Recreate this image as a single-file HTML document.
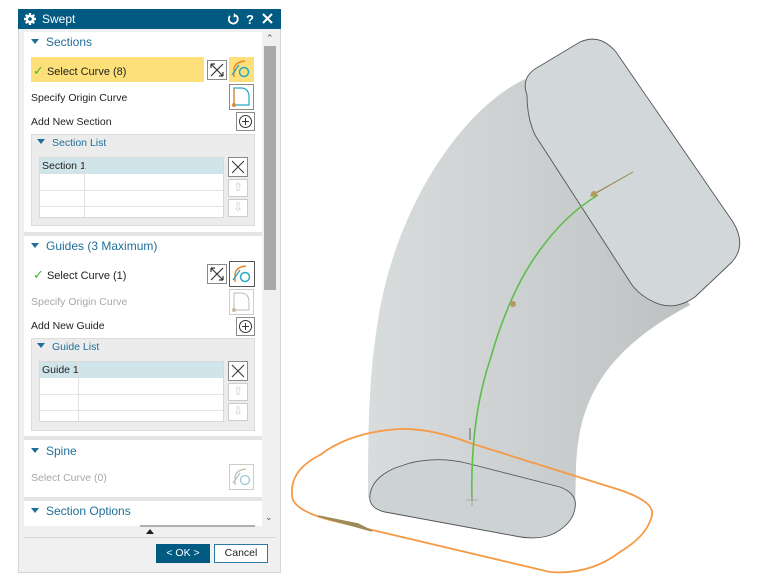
<!DOCTYPE html>
<html><head><meta charset="utf-8"><style>
*{margin:0;padding:0;box-sizing:border-box}
body{width:768px;height:583px;background:#fff;position:relative;overflow:hidden;font-family:"Liberation Sans",sans-serif;font-size:10.5px;color:#222}
.a{position:absolute}
.hdr{color:#1f6e9a;font-size:12px}
.tri{display:inline-block;width:0;height:0;border-left:4px solid transparent;border-right:4px solid transparent;border-top:5px solid #1f6e9a;margin-right:7px;vertical-align:2px}
.ib{position:absolute;border:1px solid #8a8a8a;background:#fff}
.gray{color:#a8a8a8}
.list{position:absolute;background:#ececec;border:1px solid #dcdcdc}
.tbl{position:absolute;background:#fff;border:1px solid #d8d8d8}
.sep{position:absolute;left:24px;width:238px;height:4px;background:#e4e4e4}
</style></head><body>
<div class="a" style="left:18px;top:9px;width:263px;height:564px;background:#f0f0f0;border:1px solid #d6d6d6"></div>
<div class="a" style="left:18px;top:9px;width:263px;height:20px;background:#005a82;color:#fff;font-size:12px;line-height:20px;padding-left:24px">Swept</div>
<svg class="a" style="left:23px;top:12px" width="14" height="14" viewBox="0 0 14 14"><circle cx="7" cy="7" r="4.3" fill="#fff"/><g stroke="#fff" stroke-width="2.4"><path d="M7 1v12M1 7h12M2.8 2.8l8.4 8.4M11.2 2.8l-8.4 8.4"/></g><circle cx="7" cy="7" r="1.8" fill="#005a82"/></svg>
<svg class="a" style="left:227px;top:12px" width="50" height="14" viewBox="0 0 50 14"><path d="M3 4 A4.5 4.5 0 1 0 9 3.5" fill="none" stroke="#fff" stroke-width="1.8"/><path d="M7 1 L10 4 L6.5 5.5Z" fill="#fff"/><text x="19" y="12" fill="#fff" font-size="13" font-weight="bold" font-family="Liberation Sans">?</text><path d="M36 2 L45 11 M45 2 L36 11" stroke="#fff" stroke-width="2"/></svg>
<div class="a" style="left:24px;top:32px;width:238px;height:494px;background:#fff"></div>
<div class="a" style="left:263px;top:32px;width:14px;height:494px;background:#f0f0f0"></div>
<div class="a" style="left:264px;top:46px;width:12px;height:244px;background:#a8a8a8"></div>
<div class="a" style="left:266px;top:33px;font-size:9px;color:#555">&#8963;</div>
<div class="a" style="left:265px;top:512px;font-size:9px;color:#555">&#8964;</div>
<div class="a hdr" style="left:31px;top:35px"><span class="tri"></span>Sections</div>
<div class="a" style="left:31px;top:57px;width:173px;height:25px;background:#fde07a"></div>
<div class="a" style="left:33px;top:63px;font-size:11px"><span style="color:#3cb83c;font-size:13px">&#10003;</span> Select Curve (8)</div>
<div class="ib" style="left:207px;top:60px;width:20px;height:20px"><svg width="18" height="18"><path d="M3 3L15 15M15 3L3 15M3 3h4M3 3v4M15 15h-4M15 15v-4" stroke="#333" stroke-width="1.2" fill="none"/></svg></div>
<div class="a" style="left:229px;top:57px;width:25px;height:25px;background:#fde07a"><svg width="25" height="25"><path d="M5 20 L5 12 Q6 5 16 4" stroke="#e8842a" stroke-width="1.4" fill="none"/><circle cx="15" cy="15" r="4.5" stroke="#2aa7c9" stroke-width="1.5" fill="none"/><path d="M3 18 L10 8" stroke="#2aa7c9" stroke-width="1.4"/></svg></div>
<div class="a" style="left:31px;top:92px">Specify Origin Curve</div>
<div class="ib" style="left:229px;top:84px;width:25px;height:26px"><svg width="23" height="24"><path d="M4 20 V3 H12 Q19 4 19 12 V20 H4" stroke="#2aa7c9" stroke-width="1.2" fill="none"/><path d="M4 4V20" stroke="#e8842a" stroke-width="1.3"/><circle cx="4" cy="20" r="2" fill="#e8842a"/></svg></div>
<div class="a" style="left:31px;top:116px">Add New Section</div>
<div class="ib" style="left:236px;top:112px;width:19px;height:19px"><svg width="17" height="17"><circle cx="8.5" cy="8.5" r="6" stroke="#333" fill="none"/><path d="M8.5 5v7M5 8.5h7" stroke="#333"/></svg></div>
<div class="list" style="left:31px;top:134px;width:224px;height:92px"></div>
<div class="a hdr" style="left:37px;top:137px;font-size:10.5px"><span class="tri"></span>Section List</div>
<div class="tbl" style="left:39px;top:157px;width:185px;height:61px"></div>
<div class="a" style="left:40px;top:158px;width:183px;height:16px;background:#cfe5ea"></div>
<div class="a" style="left:42px;top:160px">Section 1</div>
<div class="a" style="left:84px;top:158px;width:1px;height:59px;background:#e0e0e0"></div>
<div class="a" style="left:40px;top:190px;width:183px;height:1px;background:#e4e4e4"></div>
<div class="a" style="left:40px;top:206px;width:183px;height:1px;background:#e4e4e4"></div>
<div class="ib" style="left:228px;top:157px;width:20px;height:20px"><svg width="18" height="18"><path d="M3 3L15 15M15 3L3 15" stroke="#333"/></svg></div>
<div class="ib" style="left:228px;top:179px;width:20px;height:18px;border-color:#ccc;color:#ccc;text-align:center;font-size:12px">&#8679;</div>
<div class="ib" style="left:228px;top:199px;width:20px;height:18px;border-color:#ccc;color:#ccc;text-align:center;font-size:12px">&#8681;</div>
<div class="sep" style="top:232px"></div>
<div class="a hdr" style="left:31px;top:239px"><span class="tri"></span>Guides (3 Maximum)</div>
<div class="a" style="left:33px;top:267px;font-size:11px"><span style="color:#3cb83c;font-size:13px">&#10003;</span> Select Curve (1)</div>
<div class="ib" style="left:207px;top:264px;width:20px;height:20px"><svg width="18" height="18"><path d="M3 3L15 15M15 3L3 15M3 3h4M3 3v4M15 15h-4M15 15v-4" stroke="#333" stroke-width="1.2" fill="none"/></svg></div>
<div class="ib" style="left:229px;top:261px;width:26px;height:26px;border-color:#555"><svg width="24" height="24"><path d="M5 20 L5 12 Q6 5 16 4" stroke="#e8842a" stroke-width="1.4" fill="none"/><circle cx="15" cy="15" r="4.5" stroke="#2aa7c9" stroke-width="1.5" fill="none"/><path d="M3 18 L10 8" stroke="#2aa7c9" stroke-width="1.4"/></svg></div>
<div class="a gray" style="left:31px;top:296px">Specify Origin Curve</div>
<div class="ib" style="left:229px;top:289px;width:25px;height:26px;border-color:#ccc"><svg width="23" height="24"><path d="M4 20 V3 H12 Q19 4 19 12 V20 H4" stroke="#bbb" fill="none"/><circle cx="4" cy="20" r="2" fill="#c9b9a0"/></svg></div>
<div class="a" style="left:31px;top:320px">Add New Guide</div>
<div class="ib" style="left:236px;top:317px;width:19px;height:19px"><svg width="17" height="17"><circle cx="8.5" cy="8.5" r="6" stroke="#333" fill="none"/><path d="M8.5 5v7M5 8.5h7" stroke="#333"/></svg></div>
<div class="list" style="left:31px;top:338px;width:224px;height:93px"></div>
<div class="a hdr" style="left:37px;top:341px;font-size:10.5px"><span class="tri"></span>Guide List</div>
<div class="tbl" style="left:39px;top:361px;width:185px;height:61px"></div>
<div class="a" style="left:40px;top:362px;width:183px;height:16px;background:#cfe5ea"></div>
<div class="a" style="left:42px;top:364px">Guide 1</div>
<div class="a" style="left:78px;top:362px;width:1px;height:59px;background:#e0e0e0"></div>
<div class="a" style="left:40px;top:394px;width:183px;height:1px;background:#e4e4e4"></div>
<div class="a" style="left:40px;top:410px;width:183px;height:1px;background:#e4e4e4"></div>
<div class="ib" style="left:228px;top:361px;width:20px;height:20px"><svg width="18" height="18"><path d="M3 3L15 15M15 3L3 15" stroke="#333"/></svg></div>
<div class="ib" style="left:228px;top:383px;width:20px;height:18px;border-color:#ccc;color:#ccc;text-align:center;font-size:12px">&#8679;</div>
<div class="ib" style="left:228px;top:403px;width:20px;height:18px;border-color:#ccc;color:#ccc;text-align:center;font-size:12px">&#8681;</div>
<div class="sep" style="top:436px"></div>
<div class="a hdr" style="left:31px;top:444px"><span class="tri"></span>Spine</div>
<div class="a gray" style="left:31px;top:472px">Select Curve (0)</div>
<div class="ib" style="left:229px;top:464px;width:25px;height:26px;border-color:#ccc"><svg width="23" height="24"><path d="M5 20 L5 12 Q6 5 16 4" stroke="#c9b9a0" stroke-width="1.2" fill="none"/><circle cx="15" cy="15" r="4.5" stroke="#9fc5d3" stroke-width="1.3" fill="none"/><path d="M3 18 L10 8" stroke="#9fc5d3" stroke-width="1.2"/></svg></div>
<div class="sep" style="top:497px"></div>
<div class="a hdr" style="left:31px;top:504px"><span class="tri"></span>Section Options</div>
<div class="a" style="left:140px;top:525px;width:115px;height:2px;background:#b0b0b0"></div>
<div class="a" style="left:146px;top:529px;width:0;height:0;border-left:4px solid transparent;border-right:4px solid transparent;border-bottom:5px solid #222"></div>
<div class="a" style="left:24px;top:537px;width:252px;height:1px;background:#d8d8d8"></div>
<div class="a" style="left:156px;top:544px;width:54px;height:19px;background:#005a82;color:#fff;text-align:center;line-height:19px">&lt; OK &gt;</div>
<div class="a" style="left:214px;top:544px;width:54px;height:19px;background:#fff;border:1px solid #2a7aa8;text-align:center;line-height:17px">Cancel</div>
<svg class="a" style="left:0;top:0" width="768" height="583" viewBox="0 0 768 583">
<defs>
<linearGradient id="g1" x1="0" y1="0" x2="1" y2="0"><stop offset="0" stop-color="#d9dcdc"/><stop offset="0.45" stop-color="#cdd1d1"/><stop offset="1" stop-color="#bdc1c1"/></linearGradient>
</defs>
<path d="M525,79 C460,110 395,210 378,320 C368,380 368,440 368,497 L385,512 L515,536 Q545,540 560,530 L575,510 L576,468 C578,400 605,350 690,305 Z" fill="url(#g1)"/>
<path d="M527,95 Q520,76 540,66 L580,42 Q600,33 616,52 L733,222 Q747,245 732,262 L695,297 Q672,313 650,300 Q640,295 632,285 L535,135 Q527,118 527,95 Z" fill="#d2d8da" stroke="#555" stroke-width="0.9"/>
<path d="M370,495 Q372,478 395,468 L410,463 Q440,456 470,464 L560,487 Q578,494 575,508 Q573,523 555,533 Q540,541 515,536 L385,512 Q368,508 370,495 Z" fill="#cdd3d5" stroke="#555" stroke-width="0.9"/>
<path d="M292,495 Q290,470 320,455 Q350,432 400,429 Q430,428 470,443 L620,490 Q655,502 652,515 Q648,535 620,552 Q590,575 550,572 L330,520 Q292,510 292,495 Z" fill="none" stroke="#f59a45" stroke-width="1.8"/>
<path d="M472,500 Q470,420 490,360 Q510,290 540,250 Q565,215 598,195" fill="none" stroke="#5cbf4a" stroke-width="1.6"/>
<circle cx="513" cy="304" r="3" fill="#b49a60"/>
<path d="M590,196 L633,172 L598,192 Z" fill="#9c8a5a" stroke="#9c8a5a"/>
<circle cx="594" cy="194" r="3" fill="#b49a60"/>
<path d="M318,516 L372,531 L358,524 Z" fill="#9c8a5a" stroke="#9c8a5a" stroke-width="1.5"/>
<path d="M466,500h12M472,494v12" stroke="#999" stroke-width="0.8"/>
<path d="M470,428 v12" stroke="#999" stroke-width="2"/>
</svg>
</body></html>
